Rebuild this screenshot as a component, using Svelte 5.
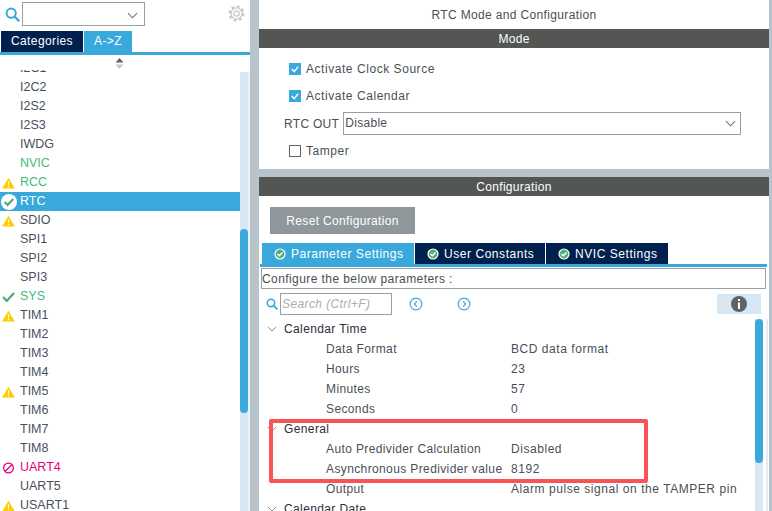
<script>
  const items = [
    { name: 'I2C1' },
    { name: 'I2C2' },
    { name: 'I2S2' },
    { name: 'I2S3' },
    { name: 'IWDG' },
    { name: 'NVIC', tone: 'green' },
    { name: 'RCC', tone: 'green', icon: 'warn' },
    { name: 'RTC', selected: true, icon: 'okround' },
    { name: 'SDIO', icon: 'warn' },
    { name: 'SPI1' },
    { name: 'SPI2' },
    { name: 'SPI3' },
    { name: 'SYS', tone: 'green', icon: 'check' },
    { name: 'TIM1', icon: 'warn' },
    { name: 'TIM2' },
    { name: 'TIM3' },
    { name: 'TIM4' },
    { name: 'TIM5', icon: 'warn' },
    { name: 'TIM6' },
    { name: 'TIM7' },
    { name: 'TIM8' },
    { name: 'UART4', tone: 'pink', icon: 'block' },
    { name: 'UART5' },
    { name: 'USART1', icon: 'warn' }
  ]

  const tabs = [
    { label: 'Parameter Settings', width: 152, active: true },
    { label: 'User Constants', width: 130 },
    { label: 'NVIC Settings', width: 122 }
  ]

  const tree = [
    { group: 'Calendar Time' },
    { label: 'Data Format', value: 'BCD data format' },
    { label: 'Hours', value: '23' },
    { label: 'Minutes', value: '57' },
    { label: 'Seconds', value: '0' },
    { group: 'General' },
    { label: 'Auto Predivider Calculation', value: 'Disabled' },
    { label: 'Asynchronous Predivider value', value: '8192' },
    { label: 'Output', value: 'Alarm pulse signal on the TAMPER pin' },
    { group: 'Calendar Date' }
  ]
</script>

{#snippet chevron(cls)}
  <svg class={cls} viewBox="0 0 12 7" aria-hidden="true"><path d="M1 1l5 5 5-5" fill="none" stroke="currentColor" stroke-width="1.1" /></svg>
{/snippet}

{#snippet lens(cls)}
  <svg class={cls} viewBox="0 0 15 15" aria-hidden="true">
    <circle cx="6.2" cy="6.2" r="4.6" fill="none" stroke="#39a9dc" stroke-width="2" />
    <path d="M9.6 9.6l4 4" stroke="#39a9dc" stroke-width="2.2" stroke-linecap="round" />
  </svg>
{/snippet}

{#snippet okdot()}
  <svg class="okdot" viewBox="0 0 12 12" aria-hidden="true">
    <circle cx="6" cy="6" r="5.6" fill="#fff" />
    <circle cx="6" cy="6" r="4.4" fill="#4fb07a" />
    <path d="M3.5 6l1.8 1.8 3.2-3.3" fill="none" stroke="#fff" stroke-width="1.4" />
  </svg>
{/snippet}

<div class="screen">
  <aside class="left">
    <div class="finder">
      {@render lens('lens-big')}
      <div class="combo">{@render chevron('combo-arrow')}</div>
      <svg class="gear" viewBox="0 0 16 16" aria-hidden="true">
        <circle cx="8" cy="8" r="6.6" fill="none" stroke="#c4c7c9" stroke-width="2" stroke-dasharray="2.6 2.6" />
        <circle cx="8" cy="8" r="5.2" fill="#fff" stroke="#c4c7c9" stroke-width="1.2" />
        <circle cx="8" cy="8" r="2.5" fill="none" stroke="#c4c7c9" stroke-width="1.2" />
      </svg>
    </div>
    <div class="side-tabs">
      <span class="side-tab cat">Categories</span>
      <span class="side-tab az">A-&gt;Z</span>
    </div>
    <div class="sort">
      <svg viewBox="0 0 9 11" aria-hidden="true">
        <path d="M4.5 0L8.5 4.5H.5z" fill="#5d6265" />
        <path d="M.5 6.5h8L4.5 11z" fill="#c5c8ca" />
      </svg>
    </div>
    <div class="list-wrap">
      <ul class="list">
        {#each items as item}
          <li class="item {item.tone ?? ''}" class:selected={item.selected}>
            <span class="slot">
              {#if item.icon === 'warn'}
                <svg class="ic" viewBox="0 0 14 12" aria-hidden="true">
                  <path d="M7 .3L13.8 12H.2z" fill="#ffcc00" />
                  <path d="M6.3 4h1.4l-.2 4.5h-1zM6.3 9.3h1.4v1.4H6.3z" fill="#fff" />
                </svg>
              {:else if item.icon === 'okround'}
                <svg class="ic round" viewBox="0 0 16 16" aria-hidden="true">
                  <circle cx="8" cy="8" r="8" fill="#fff" />
                  <path d="M3.6 8l3 3 5.6-6" fill="none" stroke="#4fa97a" stroke-width="2.2" />
                </svg>
              {:else if item.icon === 'check'}
                <svg class="ic" viewBox="0 0 13 11" aria-hidden="true">
                  <path d="M1 5.5l3.8 3.8L12 1.6" fill="none" stroke="#4fa97a" stroke-width="2.2" />
                </svg>
              {:else if item.icon === 'block'}
                <svg class="ic" viewBox="0 0 13 13" aria-hidden="true">
                  <circle cx="6.5" cy="6.5" r="5.3" fill="none" stroke="#e6007e" stroke-width="1.4" />
                  <path d="M2.9 10.1l7.2-7.2" stroke="#e6007e" stroke-width="1.4" />
                </svg>
              {/if}
            </span>
            {item.name}
          </li>
        {/each}
      </ul>
      <div class="track"><div class="thumb"></div></div>
      <div class="edge"></div>
    </div>
  </aside>

  <main class="right">
    <section class="mode">
      <h1>RTC Mode and Configuration</h1>
      <h2>Mode</h2>
      <div class="mode-body">
        <label class="check"><span class="box on"><svg viewBox="0 0 12 12" aria-hidden="true"><path d="M2.8 6l2.4 2.6 4-5" fill="none" stroke="#fff" stroke-width="1.5" /></svg></span>Activate Clock Source</label>
        <label class="check"><span class="box on"><svg viewBox="0 0 12 12" aria-hidden="true"><path d="M2.8 6l2.4 2.6 4-5" fill="none" stroke="#fff" stroke-width="1.5" /></svg></span>Activate Calendar</label>
        <div class="out">
          <span>RTC OUT</span>
          <div class="out-select">Disable{@render chevron('out-arrow')}</div>
        </div>
        <label class="check"><span class="box"></span>Tamper</label>
      </div>
    </section>

    <section class="config">
      <h2>Configuration</h2>
      <button class="reset" type="button">Reset Configuration</button>
      <div class="tabs">
        {#each tabs as tab}
          <span class="tab" class:active={tab.active} style="width: {tab.width}px">{@render okdot()}{tab.label}</span>
        {/each}
      </div>
      <div class="describe">Configure the below parameters :</div>
      <div class="tools">
        {@render lens('lens-small')}
        <div class="search">Search (Ctrl+F)</div>
        <svg class="nav first" viewBox="0 0 14 14" aria-hidden="true"><circle cx="7" cy="7" r="5.9" fill="none" stroke="#39a9dc" stroke-width="1.2" /><path d="M8 4.4L5.4 7 8 9.6" fill="none" stroke="#39a9dc" stroke-width="1.2" /></svg>
        <svg class="nav second" viewBox="0 0 14 14" aria-hidden="true"><circle cx="7" cy="7" r="5.9" fill="none" stroke="#39a9dc" stroke-width="1.2" /><path d="M6 4.4L8.6 7 6 9.6" fill="none" stroke="#39a9dc" stroke-width="1.2" /></svg>
        <div class="info">
          <svg viewBox="0 0 16 16" aria-hidden="true">
            <circle cx="8" cy="8" r="8" fill="#5f6366" />
            <path d="M7 3h2v2H7zM7 6.4h2V13H7z" fill="#fff" />
          </svg>
        </div>
      </div>
      <div class="tree-wrap">
        <div class="tree">
          {#each tree as row}
            {#if row.group}
              <div class="row group">{@render chevron('tree-arrow')}{row.group}</div>
            {:else}
              <div class="row"><span class="key">{row.label}</span><span class="val">{row.value}</span></div>
            {/if}
          {/each}
        </div>
        <div class="tree-track"><div class="tree-thumb"></div></div>
        <div class="tree-edge"></div>
        <div class="mark"></div>
      </div>
    </section>
  </main>
</div>

<style>
  :global(body) {
    margin: 0;
    background: #b8c4cc;
  }

  .screen {
    width: 772px;
    height: 511px;
    display: flex;
    overflow: hidden;
    background: #b8c4cc;
    font-family: "Liberation Sans", Arial, sans-serif;
    font-size: 12px;
    color: #4a4f54;
  }

  /* left column */
  .left {
    width: 250px;
    flex: none;
    display: flex;
    flex-direction: column;
    background: #fff;
  }

  .finder {
    height: 31px;
    flex: none;
    display: flex;
    align-items: flex-start;
    box-sizing: border-box;
    padding: 2px 5px 0 5px;
  }

  .lens-big {
    width: 15px;
    height: 15px;
    margin: 5px 2px 0 0;
  }

  .combo {
    width: 123px;
    height: 24px;
    box-sizing: border-box;
    border: 1px solid #9a9fa3;
    position: relative;
  }

  .combo-arrow {
    position: absolute;
    right: 6px;
    top: 9px;
    width: 11px;
    height: 7px;
    color: #6a6f73;
  }

  .gear {
    width: 17px;
    height: 17px;
    margin: 3px 0 0 auto;
  }

  .side-tabs {
    display: flex;
    gap: 1px;
    padding-left: 1px;
    height: 21px;
    flex: none;
    border-bottom: 3px solid #39a9dc;
  }

  .side-tab {
    color: #fff;
    line-height: 21px;
    text-align: center;
    letter-spacing: 0.4px;
    font-size: 12px;
  }

  .cat {
    width: 82px;
    background: #00204e;
  }

  .az {
    width: 48px;
    background: #39a9dc;
  }

  .sort {
    height: 17px;
    flex: none;
    display: flex;
    justify-content: center;
    padding: 3px 12px 0 0;
    box-sizing: border-box;
  }

  .sort svg {
    width: 9px;
    height: 11px;
  }

  .list-wrap {
    flex: 1;
    min-height: 0;
    display: flex;
  }

  .list {
    width: 240px;
    flex: none;
    margin: -13px 0 0;
    padding: 0;
    list-style: none;
    clip-path: inset(11px 0 0 0);
  }

  .item {
    height: 19px;
    line-height: 19px;
    display: flex;
    font-size: 12.5px;
    color: #4a4f5c;
  }

  .item.green {
    color: #45b97c;
  }

  .item.pink {
    color: #e6007e;
  }

  .item.selected {
    background: #39a9dc;
    color: #fff;
  }

  .slot {
    width: 20px;
    flex: none;
    display: flex;
    align-items: center;
    padding-left: 2px;
    box-sizing: border-box;
  }

  .ic {
    width: 13px;
    height: 12px;
  }

  .ic.round {
    width: 16px;
    height: 16px;
    margin-left: -1px;
  }

  .track {
    width: 8px;
    flex: none;
    background: #d8e7f4;
    padding-top: 157px;
    box-sizing: border-box;
  }

  .thumb {
    height: 184px;
    background: #39a9dc;
    border-radius: 4px;
  }

  .edge {
    width: 2px;
    background: #eef0f1;
  }

  /* right column */
  .right {
    width: 510px;
    flex: none;
    margin-left: 9px;
    display: flex;
    flex-direction: column;
    gap: 8px;
  }

  .mode {
    height: 169px;
    flex: none;
    background: #fff;
  }

  h1 {
    margin: 0;
    height: 29px;
    font-size: 12px;
    font-weight: 400;
    line-height: 30px;
    text-align: center;
    letter-spacing: 0.35px;
    color: #4a4f54;
  }

  h2 {
    margin: 0;
    height: 19px;
    background: #545654;
    color: #fff;
    font-size: 12px;
    font-weight: 400;
    line-height: 20px;
    text-align: center;
    letter-spacing: 0.3px;
  }

  .mode-body {
    display: flex;
    flex-direction: column;
    padding-left: 25px;
  }

  .check {
    display: flex;
    align-items: center;
    gap: 5px;
    height: 27px;
    letter-spacing: 0.55px;
  }

  .check:first-child {
    margin-top: 7px;
  }

  .box {
    width: 12px;
    height: 12px;
    margin-left: 5px;
    box-sizing: border-box;
    border: 1px solid #5f6366;
    display: block;
  }

  .box.on {
    border: none;
    background: #39a9dc;
  }

  .box svg {
    display: block;
  }

  .out {
    display: flex;
    align-items: center;
    gap: 4px;
    height: 27px;
    margin-top: 1px;
    letter-spacing: 0.3px;
  }

  .out-select {
    width: 398px;
    height: 23px;
    box-sizing: border-box;
    border: 1px solid #9a9fa3;
    padding-left: 1px;
    line-height: 21px;
    position: relative;
  }

  .out-arrow {
    position: absolute;
    right: 4px;
    top: 7px;
    width: 11px;
    height: 7px;
    color: #6a6f73;
  }

  .config {
    flex: 1;
    min-height: 0;
    background: #fff;
    display: flex;
    flex-direction: column;
  }

  .reset {
    align-self: flex-start;
    margin: 11px 0 0 11px;
    width: 145px;
    height: 27px;
    border: none;
    background: #8f979b;
    color: #fff;
    font: inherit;
    letter-spacing: 0.33px;
    flex: none;
  }

  .tabs {
    display: flex;
    gap: 1px;
    height: 21px;
    flex: none;
    margin: 9px 2px 0 1px;
    padding-left: 2px;
    border-bottom: 3px solid #39a9dc;
  }

  .tab {
    flex: none;
    background: #00204e;
    color: #fff;
    display: flex;
    align-items: center;
    box-sizing: border-box;
    padding-left: 12px;
    gap: 5px;
    letter-spacing: 0.55px;
  }

  .tab.active {
    background: #39a9dc;
  }

  .okdot {
    width: 12px;
    height: 12px;
  }

  .describe {
    margin: 1px 0 0 2px;
    width: 505px;
    height: 21px;
    flex: none;
    box-sizing: border-box;
    border: 1px solid #9a9fa3;
    line-height: 20px;
    letter-spacing: 0.42px;
  }

  .tools {
    height: 30px;
    flex: none;
    display: flex;
    align-items: center;
  }

  .lens-small {
    width: 12px;
    height: 12px;
    margin: 0 2px 0 7px;
  }

  .search {
    width: 112px;
    height: 22px;
    box-sizing: border-box;
    border: 1px solid #9a9fa3;
    padding-left: 1px;
    line-height: 20px;
    font-style: italic;
    color: #a9adb0;
    letter-spacing: 0.4px;
  }

  .nav {
    width: 14px;
    height: 14px;
  }

  .nav.first {
    margin-left: 17px;
  }

  .nav.second {
    margin-left: 34px;
  }

  .info {
    width: 44px;
    height: 20px;
    margin-left: 246px;
    background: #d8e7f4;
    display: flex;
    align-items: center;
    justify-content: center;
  }

  .info svg {
    width: 16px;
    height: 16px;
  }

  .tree-wrap {
    flex: 1;
    min-height: 0;
    position: relative;
    overflow: hidden;
  }

  .row {
    height: 20px;
    display: flex;
    align-items: center;
    padding-left: 67px;
    letter-spacing: 0.38px;
  }

  .row.group {
    padding-left: 8px;
    color: #2a2f38;
  }

  .key {
    width: 185px;
    flex: none;
    white-space: nowrap;
  }

  .val {
    white-space: nowrap;
    letter-spacing: 0.55px;
  }

  .tree-arrow {
    width: 10px;
    height: 6px;
    margin-right: 7px;
    color: #7c8084;
  }

  .tree-track {
    position: absolute;
    left: 496px;
    top: 0;
    bottom: 0;
    width: 8px;
    background: #d8e7f4;
  }

  .tree-thumb {
    height: 144px;
    background: #39a9dc;
    border-radius: 4px;
  }

  .tree-edge {
    position: absolute;
    left: 507px;
    top: 0;
    bottom: 0;
    width: 2px;
    background: #e8eaeb;
  }

  .mark {
    position: absolute;
    left: 10px;
    top: 100px;
    width: 379px;
    height: 64px;
    box-sizing: border-box;
    border: 4px solid #fb5255;
    border-radius: 2px;
  }
</style>
